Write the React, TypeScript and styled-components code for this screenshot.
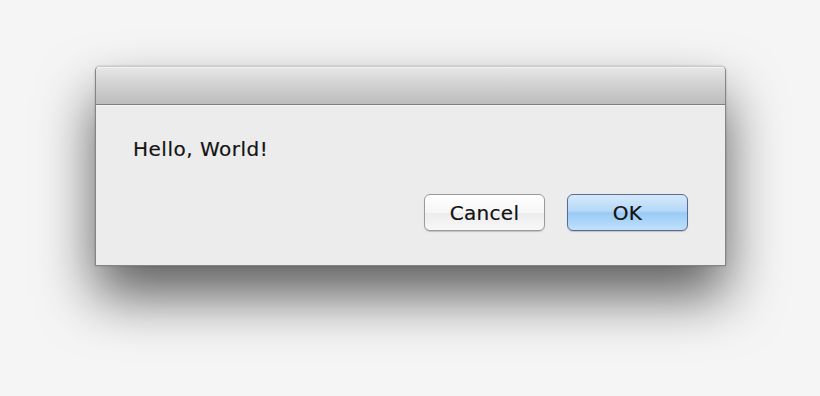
import { createGlobalStyle, styled } from 'styled-components';

const GlobalStyle = createGlobalStyle`
  html, body {
    margin: 0;
    padding: 0;
    background: #f5f5f5;
  }
  * {
    box-sizing: border-box;
  }
`;

const Page = styled.div`
  width: 820px;
  height: 396px;
  padding: 66px 0 0 95px;
  background: #f5f5f5;
  overflow: hidden;
`;

const Window = styled.div`
  width: 631px;
  height: 200px;
  display: flex;
  flex-direction: column;
  border: 1px solid #858585;
  border-top-color: #c8c8c8;
  border-radius: 5px 5px 0 0;
  background: #ececec;
  box-shadow: 0 30px 55px rgba(0, 0, 0, 0.62), 0 0 2px rgba(0, 0, 0, 0.25);
`;

const TitleBar = styled.div`
  height: 38px;
  flex-shrink: 0;
  border-radius: 4px 4px 0 0;
  background: linear-gradient(#e6e6e6, #d4d4d4 40%, #bdbdbd);
  border-top: 1px solid #f4f4f4;
  border-bottom: 1px solid #7d7d7d;
`;

const Body = styled.div`
  flex: 1;
  display: flex;
  flex-direction: column;
  padding: 31px 37px 0 37px;
  border-top: 1px solid #f6f6f6;
`;

const Message = styled.div`
  font-family: 'DejaVu Sans', 'Open Sans', sans-serif;
  font-size: 20px;
  line-height: 24px;
  color: #141414;
  letter-spacing: 0.5px;
  -webkit-text-stroke: 0.2px #141414;
`;

const Actions = styled.div`
  display: flex;
  justify-content: flex-end;
  gap: 22px;
  margin-top: 33px;
`;

const Button = styled.button<{ $primary?: boolean }>`
  width: 121px;
  height: 37px;
  padding: 0;
  border-radius: 6px;
  font-family: 'DejaVu Sans', 'Open Sans', sans-serif;
  font-size: 20px;
  color: #111;
  letter-spacing: 0.3px;
  -webkit-text-stroke: 0.2px #111;
  border: 1px solid ${(p) => (p.$primary ? '#5b6a93' : '#9a9a9a')};
  background: ${(p) =>
    p.$primary
      ? 'linear-gradient(#d6e9fb, #b6d8f8 45%, #9acbf5 52%, #bfe0fb)'
      : 'linear-gradient(#ffffff, #f6f6f6 50%, #ececec 52%, #f8f8f8)'};
  box-shadow: 0 1px 1px rgba(0, 0, 0, 0.18);
`;

const App = () => (
  <>
    <GlobalStyle />
    <Page>
      <Window>
        <TitleBar />
        <Body>
          <Message>Hello, World!</Message>
          <Actions>
            <Button>Cancel</Button>
            <Button $primary>OK</Button>
          </Actions>
        </Body>
      </Window>
    </Page>
  </>
);

export default App;
